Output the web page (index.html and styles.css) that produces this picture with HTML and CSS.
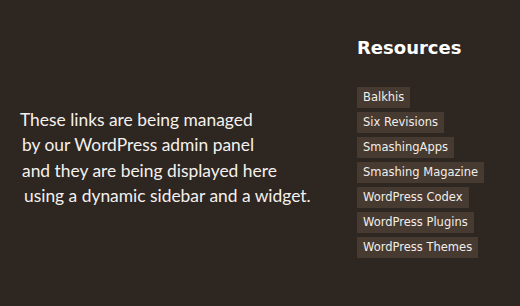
FILE: index.html
```html
<!DOCTYPE html>
<html>
<head>
<meta charset="utf-8">
<link rel="stylesheet" href="styles.css">
</head>
<body>
<div class="page">
  <div class="intro">
    <div class="line l1">These links are being managed</div>
    <div class="line l2">by our WordPress admin panel</div>
    <div class="line l3">and they are being displayed here</div>
    <div class="line l4">using a dynamic sidebar and a widget.</div>
  </div>
  <div class="sidebar">
    <h2 class="title">Resources</h2>
    <ul class="links">
      <li><a class="tag">Balkhis</a></li>
      <li><a class="tag">Six Revisions</a></li>
      <li><a class="tag">SmashingApps</a></li>
      <li><a class="tag">Smashing Magazine</a></li>
      <li><a class="tag">WordPress Codex</a></li>
      <li><a class="tag">WordPress Plugins</a></li>
      <li><a class="tag">WordPress Themes</a></li>
    </ul>
  </div>
</div>
</body>
</html>
```

FILE: styles.css
```css
html, body {
  margin: 0;
  padding: 0;
  background: #2e2621;
}
.page {
  width: 520px;
  height: 306px;
  display: flex;
  box-sizing: border-box;
}
.intro {
  width: 357px;
  padding-top: 107px;
  padding-left: 20px;
  box-sizing: border-box;
  font-family: Lato, "Open Sans", sans-serif;
  font-size: 17.4px;
  color: #f4f1ee;
}
.line {
  height: 25.3px;
  line-height: 25.3px;
  white-space: nowrap;
}
.l2, .l3 { margin-left: 2px; }
.l4 { margin-left: 4px; }
.sidebar {
  padding-top: 36px;
}
.title {
  margin: 0;
  font-family: "DejaVu Sans", Verdana, sans-serif;
  font-weight: bold;
  font-size: 18px;
  line-height: 24px;
  color: #ffffff;
}
.links {
  list-style: none;
  margin: 27px 0 0;
  padding: 0;
  display: flex;
  flex-direction: column;
  align-items: flex-start;
  gap: 4px;
}
.tag {
  display: block;
  height: 21px;
  line-height: 21px;
  padding: 0 6px;
  background: #463a31;
  font-family: "DejaVu Sans", Verdana, sans-serif;
  font-size: 11.5px;
  color: #f2eee9;
}
```
